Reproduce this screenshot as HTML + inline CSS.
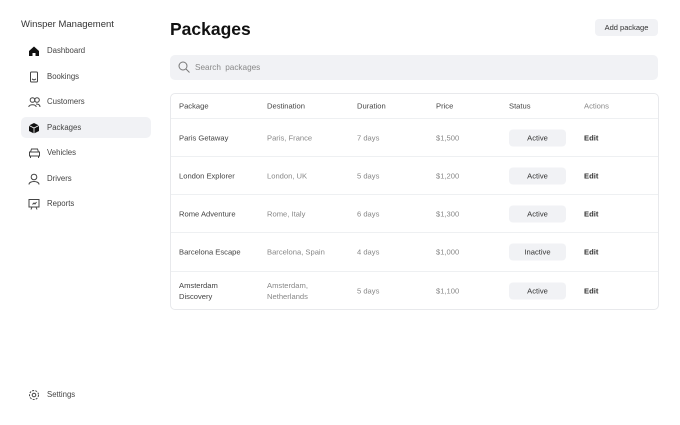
<!DOCTYPE html>
<html><head><meta charset="utf-8"><style>
*{box-sizing:border-box;margin:0;padding:0}
body{width:680px;height:425px;background:#fff;font-family:"Liberation Sans",sans-serif;position:relative;overflow:hidden;color:#333}
.brand{position:absolute;left:21px;top:19px;font-size:9.5px;color:#333}
.nav{position:absolute;left:21px;width:130px;height:21px;border-radius:5px;font-size:7.8px;color:#444;display:flex;align-items:center}
.nav svg{position:absolute;left:7px;top:5px}
.nav span{position:absolute;left:26px}
.nav.active{background:#f1f2f5}
h1{position:absolute;left:170px;top:19px;font-size:17.5px;font-weight:bold;color:#111}
.add{position:absolute;left:595px;top:19px;width:63px;height:17px;background:#f1f2f5;border-radius:4px;font-size:7.5px;color:#333;text-align:center;line-height:17px}
.search{position:absolute;left:170px;top:55px;width:488px;height:25px;background:#f1f2f5;border-radius:5px}
.search span{position:absolute;left:25px;top:8px;font-size:8.2px;color:#888;word-spacing:2px}
.search svg{position:absolute;left:8px;top:6px}
.table{position:absolute;left:170px;top:93px;width:489px;height:217px;border:1px solid #e8e9ec;border-radius:5px}
.row{position:absolute;left:0;width:487px;border-top:1px solid #eef0f2;font-size:7.6px}
.row div{position:absolute;top:50%;transform:translateY(-50%);line-height:11px}
.c1{left:8px;color:#444}.c2{left:96px;color:#888}.c3{left:186px;color:#888}.c4{left:265px;color:#888}
.c5{left:338px}.c6{left:413px;color:#333;font-weight:bold}
.badge{width:57px;height:17px;background:#f1f2f5;border-radius:4px;text-align:center;line-height:17px!important;color:#333}
.hdr div{color:#444}
</style></head><body>
<div class="brand">Winsper Management</div>
<div class="nav" style="top:40px"><svg width="12" height="12" viewBox="0 0 12 12"><path d="M1 6L6 1.5 11 6V11H7.5V8H4.5V11H1Z" fill="#111"/></svg><span>Dashboard</span></div>
<div class="nav" style="top:66px"><svg width="12" height="12" viewBox="0 0 12 12" fill="none" stroke="#444" stroke-width="1"><rect x="2.5" y="1" width="7" height="10" rx="1"/><path d="M4 8l2 1 2-1"/></svg><span>Bookings</span></div>
<div class="nav" style="top:91px"><svg width="13" height="12" viewBox="0 0 13 12" fill="none" stroke="#444" stroke-width="1"><circle cx="4.5" cy="4" r="2.3"/><circle cx="9" cy="4" r="2.3"/><path d="M0.8 11c0-3 7.4-3 7.4 0M8 8c2 0 4 .8 4 3"/></svg><span>Customers</span></div>
<div class="nav active" style="top:117px"><svg width="12" height="12" viewBox="0 0 12 12"><path d="M6 1L11 3.5V9L6 11.5 1 9V3.5Z" fill="#111"/><path d="M1 3.5L6 6 11 3.5M6 6V11.5" stroke="#fff" stroke-width=".8" fill="none"/></svg><span>Packages</span></div>
<div class="nav" style="top:142px"><svg width="13" height="12" viewBox="0 0 13 12" fill="none" stroke="#444" stroke-width="1"><path d="M2.5 5L3.5 2h6l1 3M1.5 5h10v4h-10zM2.5 9v2M10.5 9v2"/></svg><span>Vehicles</span></div>
<div class="nav" style="top:168px"><svg width="12" height="12" viewBox="0 0 12 12" fill="none" stroke="#444" stroke-width="1"><circle cx="6" cy="4" r="2.8"/><path d="M1 11.5c0-4 10-4 10 0"/></svg><span>Drivers</span></div>
<div class="nav" style="top:193px"><svg width="12" height="12" viewBox="0 0 12 12" fill="none" stroke="#444" stroke-width="1"><rect x="1" y="1.5" width="10" height="7.5"/><path d="M4 9l-1 2.5M8 9l1 2.5M4.5 6.5l1.5-1.5 1 1 1.5-2"/></svg><span>Reports</span></div>
<div class="nav" style="top:384px"><svg width="12" height="12" viewBox="0 0 12 12" fill="none" stroke="#444" stroke-width="1"><circle cx="6" cy="6" r="1.8"/><circle cx="6" cy="6" r="4.5" stroke-dasharray="2 1.2"/></svg><span>Settings</span></div>

<h1>Packages</h1>
<div class="add">Add package</div>
<div class="search"><svg width="12" height="12" viewBox="0 0 12 12" fill="none" stroke="#777" stroke-width="1"><circle cx="5" cy="5" r="4"/><path d="M8 8l3.5 3.5"/></svg><span>Search packages</span></div>

<div class="table">
<div class="row hdr" style="top:0;height:24px;border-top:none"><div class="c1">Package</div><div class="c2" style="color:#444">Destination</div><div class="c3" style="color:#444">Duration</div><div class="c4" style="color:#444">Price</div><div class="c5">Status</div><div class="c6" style="color:#888;font-weight:normal">Actions</div></div>
<div class="row" style="top:24px;height:38px"><div class="c1">Paris Getaway</div><div class="c2">Paris, France</div><div class="c3">7 days</div><div class="c4">$1,500</div><div class="c5 badge">Active</div><div class="c6">Edit</div></div>
<div class="row" style="top:62px;height:38px"><div class="c1">London Explorer</div><div class="c2">London, UK</div><div class="c3">5 days</div><div class="c4">$1,200</div><div class="c5 badge">Active</div><div class="c6">Edit</div></div>
<div class="row" style="top:100px;height:38px"><div class="c1">Rome Adventure</div><div class="c2">Rome, Italy</div><div class="c3">6 days</div><div class="c4">$1,300</div><div class="c5 badge">Active</div><div class="c6">Edit</div></div>
<div class="row" style="top:138px;height:39px"><div class="c1">Barcelona Escape</div><div class="c2">Barcelona, Spain</div><div class="c3">4 days</div><div class="c4">$1,000</div><div class="c5 badge">Inactive</div><div class="c6">Edit</div></div>
<div class="row" style="top:177px;height:39px"><div class="c1">Amsterdam<br>Discovery</div><div class="c2">Amsterdam,<br>Netherlands</div><div class="c3">5 days</div><div class="c4">$1,100</div><div class="c5 badge">Active</div><div class="c6">Edit</div></div>
</div>
</body></html>
